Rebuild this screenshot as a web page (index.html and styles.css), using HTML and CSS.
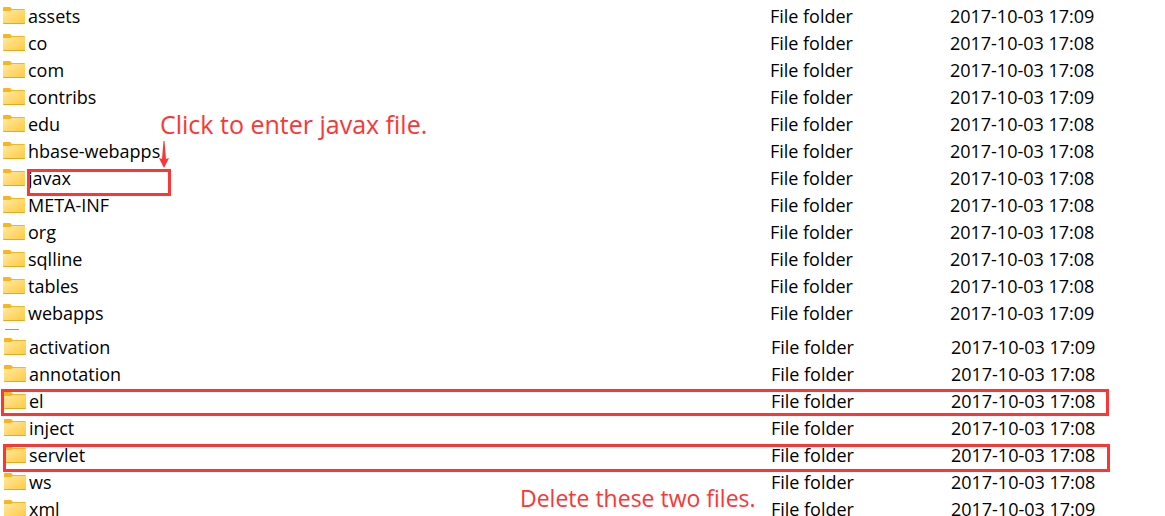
FILE: index.html
```html
<!DOCTYPE html>
<html lang="en">
<head>
    <meta charset="UTF-8">
    <meta name="viewport" content="width=device-width, initial-scale=1.0">
    <title>Files</title>
    <link rel="stylesheet" href="styles.css">
</head>
<body>
    <svg class="defs" width="0" height="0" aria-hidden="true">
        <defs>
            <linearGradient id="front" x1="0" y1="0" x2="1" y2="1">
                <stop offset="0" stop-color="#ffe9a2"/>
                <stop offset="1" stop-color="#ffca3e"/>
            </linearGradient>
        </defs>
        <symbol id="folder" viewBox="0 0 22 17">
            <path d="M0 1Q0 0 1 0H7L9 2H21Q22 2 22 3V6H0Z" fill="#f8b51c"/>
            <path d="M0 4H7L9 3H22V16Q22 17 21 17H1Q0 17 0 16Z" fill="url(#front)"/>
            <path d="M0 16H22Q22 17 21 17H1Q0 17 0 16Z" fill="#e8a820"/>
        </symbol>
    </svg>

    <main>
        <section class="listing">
            <table class="files" aria-label="Unpacked files">
                <tbody id="root"></tbody>
            </table>
            <div class="mark mark-javax"></div>
            <p class="note note-enter">Click to enter javax file.</p>
            <svg class="arrow" width="10" height="27" viewBox="0 0 10 27" aria-hidden="true">
                <path d="M4.5 0H5.5L7 18L10 17L5 27L0 17L3 18Z" fill="#fd3535"/>
            </svg>
        </section>

        <div class="divider"></div>

        <section class="listing inner">
            <table class="files" aria-label="Files in javax">
                <tbody id="javax"></tbody>
            </table>
            <div class="mark mark-el"></div>
            <div class="mark mark-servlet"></div>
            <p class="note note-delete">Delete these two files.</p>
        </section>
    </main>

    <script>
        const root = [
            ["assets", "17:09"], ["co", "17:08"], ["com", "17:08"], ["contribs", "17:09"],
            ["edu", "17:08"], ["hbase-webapps", "17:08"], ["javax", "17:08"], ["META-INF", "17:08"],
            ["org", "17:08"], ["sqlline", "17:08"], ["tables", "17:08"], ["webapps", "17:09"]
        ];
        const javax = [
            ["activation", "17:09"], ["annotation", "17:08"], ["el", "17:08"], ["inject", "17:08"],
            ["servlet", "17:08"], ["ws", "17:08"], ["xml", "17:09"]
        ];

        function fill(id, files) {
            document.getElementById(id).innerHTML = files.map(([name, time]) => `
                <tr>
                    <td class="name"><div class="file"><svg class="folder" aria-hidden="true"><use href="#folder"/></svg><span>${name}</span></div></td>
                    <td class="type">File folder</td>
                    <td class="date">2017-10-03 ${time}</td>
                </tr>`).join("");
        }

        fill("root", root);
        fill("javax", javax);
    </script>
</body>
</html>
```

FILE: styles.css
```css
body {
    margin: 0;
    background: #fff;
    color: #000;
    font-family: 'Open Sans', 'Noto Sans', sans-serif;
    font-size: 18px;
    line-height: 27px;
}
.defs {
    position: absolute;
}
main {
    height: 100vh;
    overflow: hidden;
    padding-top: 3px;
    box-sizing: border-box;
}
.listing {
    position: relative;
}
.files {
    width: 100%;
    table-layout: fixed;
    border-collapse: collapse;
}
.files td {
    height: 27px;
    padding: 0;
    white-space: nowrap;
}
.files .type,
.files .date {
    padding-left: 1px;
}
.name {
    width: 66%;
}
.type {
    width: 179px;
}
.file {
    display: flex;
    align-items: center;
    gap: 3px;
    padding-left: 3px;
}
.folder {
    width: 22px;
    height: 17px;
    margin-bottom: 2px;
}
.divider {
    width: 14px;
    height: 1px;
    margin: 2px 0 4px 5px;
    background: #999;
}
.inner .files {
    margin-left: 1px;
}

/* red annotations drawn over the lists */
.mark {
    position: absolute;
    box-sizing: border-box;
    border: 3px solid #fd3535;
}
.mark-javax {
    top: 166px;
    left: 27px;
    width: 144px;
    height: 27px;
}
.mark-el {
    top: 55px;
    left: 1px;
    right: 56px;
    height: 27px;
}
.mark-servlet {
    top: 110px;
    left: 3px;
    right: 55px;
    height: 28px;
}
.note {
    position: absolute;
    margin: 0;
    color: #fd3535;
    white-space: nowrap;
}
.note-enter {
    top: 108px;
    left: 160px;
    font-size: 25px;
}
.note-delete {
    top: 151px;
    left: 520px;
    font-size: 23px;
}
.arrow {
    position: absolute;
    top: 138px;
    left: 159px;
}
```
